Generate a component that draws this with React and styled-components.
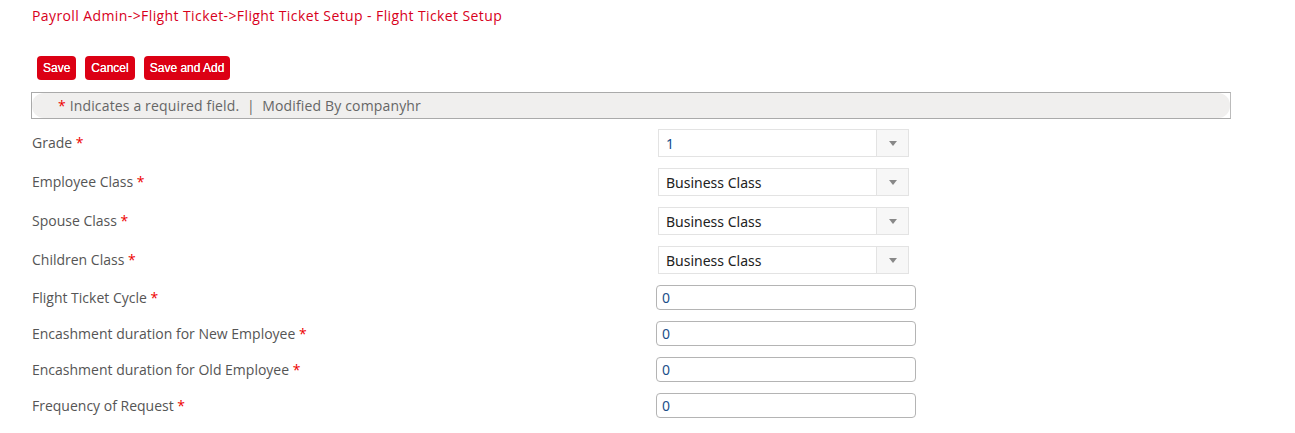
import { Fragment } from "react";
import styled, { createGlobalStyle } from "styled-components";

const Global = createGlobalStyle`
  body {
    margin: 0;
    background: #fff;
    font-family: "Open Sans", "DejaVu Sans", sans-serif;
  }
`;

const Page = styled.div`
  padding: 6px 0 0 31px;
  width: 1200px;
`;

const Crumb = styled.div`
  height: 20px;
  padding-left: 1px;
  font-size: 14px;
  line-height: 20px;
  letter-spacing: 0.4px;
  color: #d8001c;
`;

const Toolbar = styled.div`
  display: flex;
  gap: 9px;
  margin: 30px 0 12px 6px;
`;

const Button = styled.button`
  height: 24px;
  padding: 0 6px;
  border: 0;
  border-radius: 4px;
  background: #dc0014;
  color: #fff;
  font-family: "Liberation Sans", Arial, sans-serif;
  font-size: 12px;
  text-shadow: 0 0 0.3px #fff;
  cursor: pointer;
`;

const Bar = styled.div`
  height: 25px;
  border: 1px solid #aaa;
  border-right-color: #bbb;
  background: #fff;
`;

const BarInner = styled.div`
  height: 100%;
  padding-left: 26px;
  border-radius: 12px;
  background: #f0efee;
  font-size: 14px;
  line-height: 25px;
  letter-spacing: 0.15px;
  color: #666;
`;

const Star = styled.span`
  color: #e00;
`;

const Form = styled.div`
  display: grid;
  grid-template-columns: 625px auto;
  row-gap: 11px;
  align-items: center;
  margin-top: 10px;
`;

const Label = styled.div`
  padding-left: 1px;
  font-size: 14px;
  line-height: 18px;
  color: #555;
`;

const SelectBox = styled.div`
  display: flex;
  width: 249px;
  height: 26px;
  margin-left: 2px;
  border: 1px solid #e3e3e3;
  font-family: "Noto Sans", "Open Sans", sans-serif;
  font-size: 14px;
  color: #222;
`;

const SelectValue = styled.div`
  flex: 1;
  padding-left: 7px;
  line-height: 27px;
  color: ${(p) => (p.$num ? "#134a8c" : "#222")};
`;

const Arrow = styled.div`
  display: flex;
  align-items: center;
  justify-content: center;
  width: 31px;
  border-left: 1px solid #e3e3e3;
  background: #f7f7f7;

  &::after {
    content: "";
    border-left: 4px solid transparent;
    border-right: 4px solid transparent;
    border-top: 5px solid #888;
  }
`;

const TextInput = styled.input`
  box-sizing: border-box;
  width: 260px;
  height: 25px;
  padding: 0 5px;
  border: 1px solid #b4b4b4;
  border-radius: 4px;
  font-family: "Noto Sans", "Open Sans", sans-serif;
  font-size: 14px;
  color: #1c4f8a;
  outline: none;
`;

const selects = [
  { label: "Grade", value: "1", num: true },
  { label: "Employee Class", value: "Business Class" },
  { label: "Spouse Class", value: "Business Class" },
  { label: "Children Class", value: "Business Class" },
];

const inputs = [
  "Flight Ticket Cycle",
  "Encashment duration for New Employee",
  "Encashment duration for Old Employee",
  "Frequency of Request",
];

const App = () => {
  return (
    <Page>
      <Global />
      <Crumb>Payroll Admin-&gt;Flight Ticket-&gt;Flight Ticket Setup - Flight Ticket Setup</Crumb>
      <Toolbar>
        <Button>Save</Button>
        <Button>Cancel</Button>
        <Button>Save and Add</Button>
      </Toolbar>
      <Bar>
        <BarInner>
          <Star>*</Star> Indicates a required field.&nbsp; |&nbsp; Modified By companyhr
        </BarInner>
      </Bar>
      <Form>
        {selects.map((s) => (
          <Fragment key={s.label}>
            <Label>
              {s.label} <Star>*</Star>
            </Label>
            <SelectBox>
              <SelectValue $num={s.num}>{s.value}</SelectValue>
              <Arrow />
            </SelectBox>
          </Fragment>
        ))}
        {inputs.map((l) => (
          <Fragment key={l}>
            <Label>
              {l} <Star>*</Star>
            </Label>
            <TextInput defaultValue="0" />
          </Fragment>
        ))}
      </Form>
    </Page>
  );
};

export default App;
